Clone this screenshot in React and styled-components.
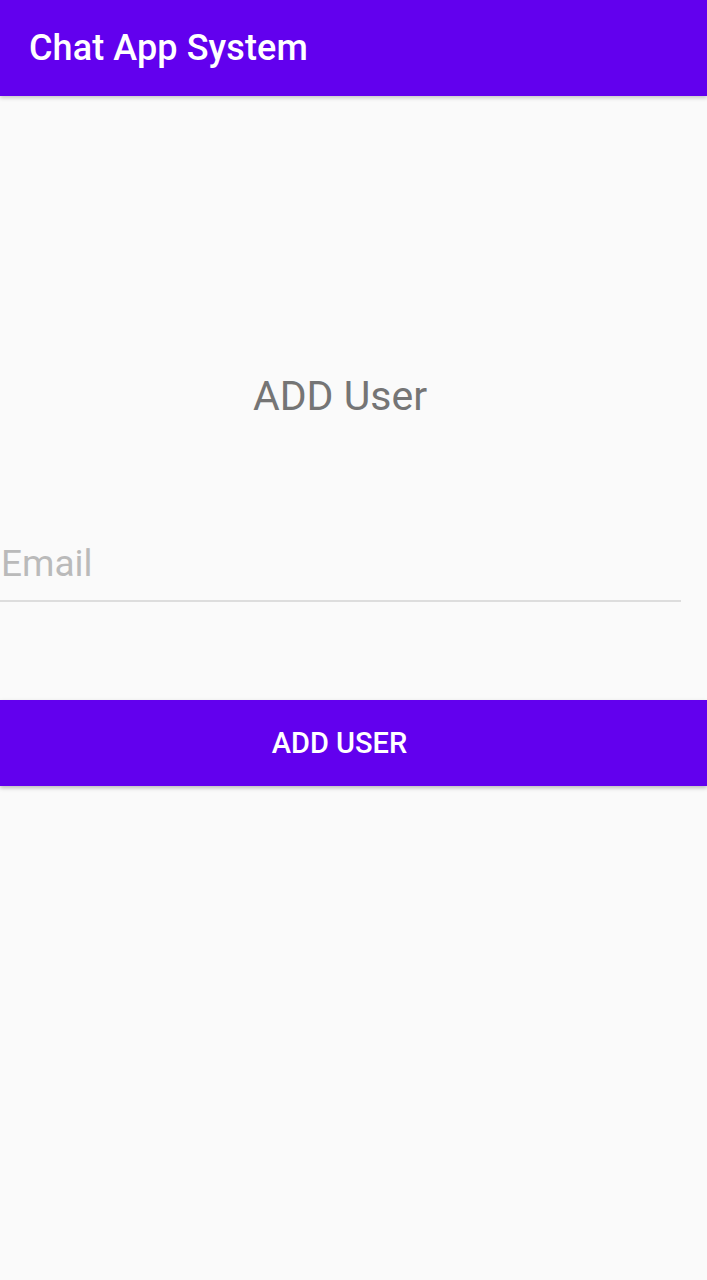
import React from 'react';
import styled, { createGlobalStyle } from 'styled-components';

const GlobalStyle = createGlobalStyle`
	html, body {
		margin: 0;
		padding: 0;
		background: #fafafa;
		font-family: Roboto, 'Liberation Sans', sans-serif;
	}
	#root {
		min-height: 100vh;
	}
`;

const App = () => {
	return (
		<>
			<GlobalStyle />
			<Page>
				<AppBar>
					<Title>Chat App System</Title>
				</AppBar>
				<Content>
					<Heading>ADD User</Heading>
					<Field>
						<EmailInput placeholder='Email' />
					</Field>
					<AddButton>ADD USER</AddButton>
				</Content>
			</Page>
		</>
	);
};

export default App;

const Page = styled.div`
	min-height: 100vh;
	background: #fafafa;
	display: flex;
	flex-direction: column;
`;
const AppBar = styled.header`
	height: 96px;
	background-color: #6200ee;
	display: flex;
	align-items: center;
	padding-left: 29px;
	box-shadow: 0 2px 4px rgba(0, 0, 0, 0.2);
	position: relative;
	z-index: 2;
`;
const Title = styled.h1`
	margin: 0;
	color: #ffffff;
	font-size: 36px;
	font-weight: 500;
	letter-spacing: 0.1px;
`;
const Content = styled.main`
	display: flex;
	flex-direction: column;
	padding-top: 270px;
`;
const Heading = styled.h2`
	margin: 0;
	width: 680px;
	text-align: center;
	color: #757575;
	font-size: 41px;
	font-weight: 400;
	line-height: 60px;
`;
const Field = styled.div`
	width: 681px;
	margin-top: 110px;
	border-bottom: 2px solid #dddddd;
`;
const EmailInput = styled.input`
	width: 100%;
	box-sizing: border-box;
	border: none;
	outline: none;
	background: transparent;
	padding: 0 0 9px 1px;
	height: 64px;
	font-family: Roboto, 'Liberation Sans', sans-serif;
	font-size: 37px;
	color: #212121;
	&::placeholder {
		color: #bababa;
	}
`;
const AddButton = styled.button`
	margin-top: 98px;
	width: 100%;
	height: 86px;
	border: none;
	background-color: #6200ee;
	color: #ffffff;
	font-family: Roboto, 'Liberation Sans', sans-serif;
	font-size: 29px;
	font-weight: 500;
	text-transform: uppercase;
	padding: 0 28px 0 0;
	box-shadow: 0 2px 4px rgba(0, 0, 0, 0.25);
	cursor: pointer;
`;
